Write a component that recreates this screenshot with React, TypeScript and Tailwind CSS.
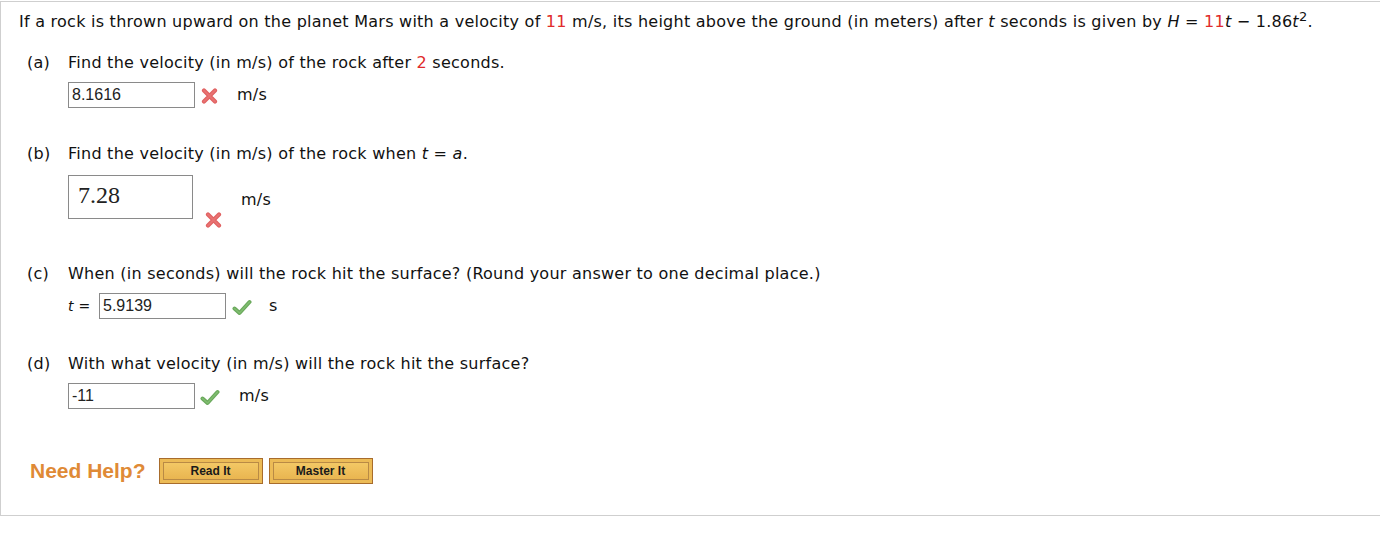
import React from "react";

const body = "[font-family:'DejaVu_Sans',Verdana,sans-serif] text-[16px] tracking-[0.25px] leading-[20px] text-[#111]";

function WrongIcon() {
  return (
    <svg width="17" height="16" viewBox="0 0 17 16">
      <path d="M3 2.5 L14 13.5 M14 2.5 L3 13.5" stroke="#e06060" strokeWidth="4.2" strokeLinecap="round" />
      <path d="M3 2.5 L14 13.5 M14 2.5 L3 13.5" stroke="#e87272" strokeWidth="2" strokeLinecap="round" />
    </svg>
  );
}

function RightIcon() {
  return (
    <svg width="20" height="17" viewBox="0 0 20 17">
      <path d="M2.5 9.5 L7.5 14 L17.5 3" fill="none" stroke="#6aa95c" strokeWidth="4" strokeLinecap="round" strokeLinejoin="round" />
      <path d="M2.5 9.5 L7.5 14 L17.5 3" fill="none" stroke="#80bd70" strokeWidth="1.6" strokeLinecap="round" strokeLinejoin="round" />
    </svg>
  );
}

function Answer({ value }: { value: string }) {
  return (
    <div className="w-[127px] h-[26px] border border-[#8a8a8a] bg-white pl-[3px] flex items-center font-['Liberation_Sans',Arial,sans-serif] text-[16px] tracking-normal text-[#222]">
      {value}
    </div>
  );
}

function Part({ label, children }: { label: string; children: React.ReactNode }) {
  return (
    <div className="flex h-[20px] items-center pl-[8px] pt-[2px]">
      <span className="w-[41px]">{label}</span>
      <span>{children}</span>
    </div>
  );
}

function HelpButton({ text }: { text: string }) {
  return (
    <div className="h-[26px] w-[104px] border border-[#a86c2c] bg-[#ecbb56] p-[3px]">
      <div className="flex h-full items-center justify-center border border-[#b98a45] bg-gradient-to-b from-[#f3c865] to-[#e9b550] font-['Liberation_Sans',Arial,sans-serif] text-[12px] font-bold tracking-normal text-[#1a1a1a]">
        {text}
      </div>
    </div>
  );
}

export default function App() {
  return (
    <div className="w-[1380px] h-[558px] overflow-hidden bg-white">
      <div className={`mt-px w-[1400px] border-l border-t border-b border-[#cfcfcf] pl-[18px] pt-[9px] pb-[31px] ${body}`}>
        <div className="h-[20px] pt-px">
          If a rock is thrown upward on the planet Mars with a velocity of <span className="text-[#e02b2b]">11</span> m/s, its
          height above the ground (in meters) after <i>t</i> seconds is given by <i>H</i> = <span className="text-[#e02b2b]">11</span>
          <i>t</i> − 1.86<i>t</i>
          <sup className="text-[13px]">2</sup>.
        </div>

        <div className="mt-[21px]">
          <Part label="(a)">
            Find the velocity (in m/s) of the rock after <span className="text-[#e02b2b]">2</span> seconds.
          </Part>
        </div>
        <div className="mt-[10px] ml-[49px] flex items-center">
          <Answer value="8.1616" />
          <span className="ml-[6px] mt-[2px]">
            <WrongIcon />
          </span>
          <span className="ml-[19px]">m/s</span>
        </div>

        <div className="mt-[35px]">
          <Part label="(b)">
            Find the velocity (in m/s) of the rock when <i>t</i> = <i>a</i>.
          </Part>
        </div>
        <div className="mt-[12px] ml-[49px] flex h-[53px] items-start">
          <div className="w-[125px] h-[44px] border border-[#8a8a8a] pl-[9px] pt-[5px] font-['Liberation_Serif','Times_New_Roman',serif] text-[24px] leading-[28px] tracking-normal text-[#222]">
            7.28
          </div>
          <span className="ml-[12px] mt-[37px]">
            <WrongIcon />
          </span>
          <span className="ml-[19px] mt-[15px]">m/s</span>
        </div>

        <div className="mt-[35px]">
          <Part label="(c)">
            When (in seconds) will the rock hit the surface? (Round your answer to one decimal place.)
          </Part>
        </div>
        <div className="mt-[10px] ml-[49px] flex items-center">
          <span className="w-[31px] text-[14px]">
            <i>t</i> =
          </span>
          <Answer value="5.9139" />
          <span className="ml-[6px] mt-[3px]">
            <RightIcon />
          </span>
          <span className="ml-[17px]">s</span>
        </div>

        <div className="mt-[34px]">
          <Part label="(d)">With what velocity (in m/s) will the rock hit the surface?</Part>
        </div>
        <div className="mt-[10px] ml-[49px] flex items-center">
          <Answer value="-11" />
          <span className="ml-[5px] mt-[3px]">
            <RightIcon />
          </span>
          <span className="ml-[19px]">m/s</span>
        </div>

        <div className="mt-[49px] ml-[11px] flex items-center">
          <span className="font-['Liberation_Sans',Arial,sans-serif] text-[21px] font-bold tracking-normal text-[#df8a36]">Need Help?</span>
          <span className="ml-[13px]">
            <HelpButton text="Read It" />
          </span>
          <span className="ml-[6px]">
            <HelpButton text="Master It" />
          </span>
        </div>
      </div>
    </div>
  );
}
